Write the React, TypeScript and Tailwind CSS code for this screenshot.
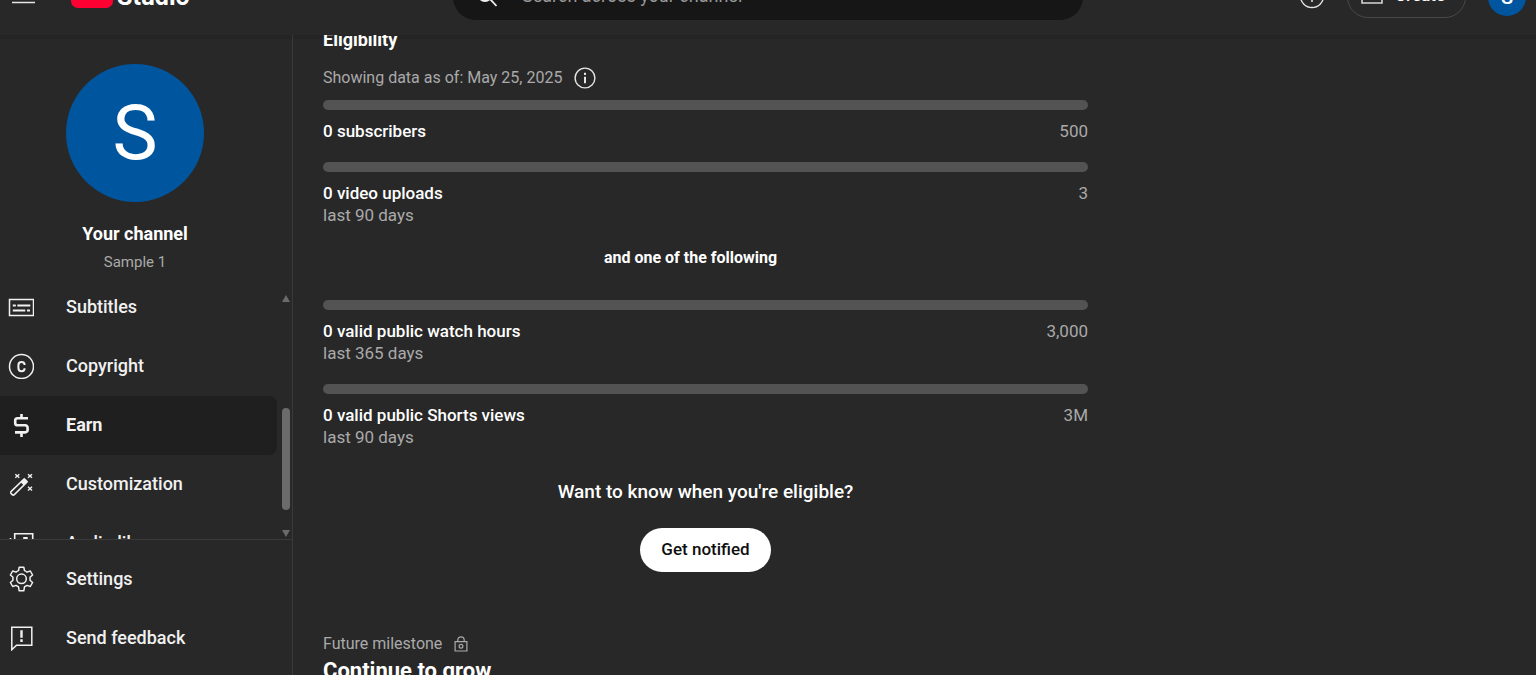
import type { ReactNode } from "react";

const SubtitlesIcon = () => (
  <svg viewBox="0 0 26 26" className="size-[26px]" fill="none" stroke="currentColor">
    <rect x="1.500" y="5.500" width="24" height="16" strokeWidth="1.500" />
    <path d="M4.800 11.500h3M9.300 11.500h13M4.800 16.500h12.500M19 16.500h3" strokeWidth="2.200" />
  </svg>
);

const CopyrightIcon = () => (
  <svg viewBox="0 0 26 26" className="size-[26px]" fill="none" stroke="currentColor">
    <circle cx="13.500" cy="13.500" r="12" strokeWidth="1.500" />
    <path d="M16.600 11.900c0-1.900-1.200-2.900-3-2.900s-3.200 1.200-3.200 3.200v2.800c0 2 1.300 3.200 3.200 3.200s3-1 3-2.900" strokeWidth="2" />
  </svg>
);

const EarnIcon = () => (
  <svg viewBox="0 0 26 26" className="size-[26px]" fill="none" stroke="currentColor">
    <path d="M20 6.200H9.600A2.400 2.400 0 0 0 7.200 8.600v2.300a2.400 2.400 0 0 0 2.400 2.400h7.600a2.400 2.400 0 0 1 2.400 2.400V18a2.400 2.400 0 0 1-2.400 2.400H7M13.500 2v4M13.500 20.500V25" strokeWidth="2.600" />
  </svg>
);

const CustomizationIcon = () => (
  <svg viewBox="0 0 26 26" className="size-[26px]" fill="none" stroke="currentColor">
    <path d="M3.200 20.400 15.800 8.200l3 3L6.300 23.600a1.500 1.500 0 0 1-2.100 0l-1-1a1.500 1.500 0 0 1 0-2.200Z" strokeWidth="1.500" />
    <path d="m12.800 11 3.700-3.600 3.100 3-3.600 3.600z" fill="currentColor" />
    <path d="m7.300 3.200 4 3.600m0-3.600-4 3.600M20 3.200l4 3.600m0-3.600-4 3.600M20 15.800l4 3.600m0-3.600-4 3.600" strokeWidth="1.400" />
  </svg>
);

const AudioIcon = () => (
  <svg viewBox="0 0 26 26" className="size-[26px]" fill="none" stroke="currentColor" strokeWidth="1.600">
    <path d="M6.700 3.700h18v17.500h-18zM2.500 8v17h17" />
    <path d="M16.700 16V8.500h3" strokeWidth="3" />
    <circle cx="14.500" cy="16" r="2" fill="currentColor" />
  </svg>
);

const SettingsIcon = () => (
  <svg viewBox="0 0 26 26" className="size-[26px]" fill="none" stroke="currentColor" strokeWidth="1.500" strokeLinejoin="round">
    <path d="M11.200 1.200h4.600l.7 3.400a9 9 0 0 1 2.500 1.500l3.300-1.100 2.300 4-2.600 2.300a9 9 0 0 1 0 2.900l2.600 2.300-2.300 4-3.300-1.100a9 9 0 0 1-2.500 1.400l-.7 4h-4.600l-.7-4a9 9 0 0 1-2.500-1.400l-3.300 1.100-2.300-4 2.600-2.300a9 9 0 0 1 0-2.900L2.400 9l2.300-4L8 6.100a9 9 0 0 1 2.500-1.500z" />
    <circle cx="13.500" cy="12.800" r="4.800" />
  </svg>
);

const FeedbackIcon = () => (
  <svg viewBox="0 0 26 26" className="size-[26px]" fill="none" stroke="currentColor">
    <path d="M3.800 2.200h20v18H8.500l-4.700 4.500z" strokeWidth="1.500" />
    <path d="M13.500 5.200v7.500M13.500 14.300v2.700" strokeWidth="2.400" />
  </svg>
);

const InfoIcon = () => (
  <svg viewBox="0 0 22 22" className="size-[22px]" fill="none" stroke="#e5e5e5">
    <circle cx="11" cy="11" r="9.900" strokeWidth="1.400" />
    <path d="M11 5.800V8M11 9.700v6.500" strokeWidth="2" />
  </svg>
);

const LockIcon = () => (
  <svg viewBox="0 0 14 16" className="h-4 w-3.5" fill="none" stroke="currentColor" strokeWidth="1.200">
    <path d="M1.100 5.600h11.800v9.400H1.100zM3.800 5.600V4a3.200 3.200 0 0 1 6.400 0v1.600" />
    <circle cx="7" cy="10.200" r="1.900" />
  </svg>
);

type NavItem = { label: string; icon: ReactNode; active?: boolean };

const NAV_ITEMS: NavItem[] = [
  { label: "Subtitles", icon: <SubtitlesIcon /> },
  { label: "Copyright", icon: <CopyrightIcon /> },
  { label: "Earn", icon: <EarnIcon />, active: true },
  { label: "Customization", icon: <CustomizationIcon /> },
  { label: "Audio library", icon: <AudioIcon /> },
];

const FOOTER_ITEMS: NavItem[] = [
  { label: "Settings", icon: <SettingsIcon /> },
  { label: "Send feedback", icon: <FeedbackIcon /> },
];

function NavLink({ label, icon, active }: NavItem) {
  return (
    <a
      href="#"
      className={`flex h-[59px] shrink-0 items-center gap-8 rounded-r-lg pb-0.5 pl-2 text-lg text-[#f1f1f1] ${active ? "bg-[#1f1f1f] font-bold" : "font-medium"}`}
    >
      {icon}
      {label}
    </a>
  );
}

function Requirement({ label, period, goal }: { label: string; period?: string; goal: string }) {
  return (
    <div>
      <div className="h-2.5 rounded-full bg-[#535353]" />
      <div className="mt-2.5 flex justify-between text-[17px] leading-[22px]">
        <span className="font-medium text-white">{label}</span>
        <span className="text-[#aaa]">{goal}</span>
      </div>
      {period && <p className="text-[17px] leading-[22px] text-[#aaa]">{period}</p>}
    </div>
  );
}

function Header() {
  return (
    <header className="shrink-0 overflow-hidden shadow-[0_4px_0_#242424]">
      <div className="-mt-[42px] flex h-[77px] items-center px-2.5">
        <div className="flex flex-1 items-center">
          <button aria-label="Menu" className="w-[27px]">
            <svg viewBox="0 0 27 14" className="h-3.5 w-[27px]" stroke="#e5e5e5" strokeWidth="1.500">
              <path d="M2 1h23M2 7h23M2 12.500h23" />
            </svg>
          </button>
          <a href="#" className="ml-[34px] flex items-center gap-1 text-[25px] font-bold text-white">
            <svg viewBox="0 0 42 24" className="h-6 w-[42px]">
              <rect y="-6" width="42" height="29" rx="7" fill="#ff0033" />
              <path d="m17 3 9 5-9 5z" fill="#fff" />
            </svg>
            Studio
          </a>
        </div>

        <label className="flex h-[46px] w-[630px] items-center gap-[23px] rounded-full bg-[#161616] pl-[22px]">
          <svg viewBox="0 0 24 24" className="size-6" fill="none" stroke="#f1f1f1" strokeWidth="1.800">
            <circle cx="10" cy="9" r="7" />
            <path d="m15 14 6.500 7" />
          </svg>
          <input
            type="text"
            aria-label="Search"
            placeholder="Search across your channel"
            className="flex-1 bg-transparent pb-0.5 text-lg outline-none placeholder:text-[#999]"
          />
        </label>

        <div className="flex flex-1 items-center justify-end gap-[22px]">
          <button aria-label="Help">
            <svg viewBox="0 0 26 26" className="size-[26px]" fill="none" stroke="#e5e5e5">
              <circle cx="13" cy="12" r="11.500" strokeWidth="1.400" />
              <path d="M9.500 8.500a3.500 3.500 0 1 1 5 3.200c-1 .5-1.500 1-1.500 2.300M13 15.500v2.500" strokeWidth="1.500" />
            </svg>
          </button>
          <button className="flex h-[42px] w-[119px] items-center gap-3 rounded-full border border-[#484848] pb-0.5 pl-[13px] text-[17px] font-medium text-white">
            <svg viewBox="0 0 22 16" className="h-4 w-[22px]" fill="none" stroke="#d5d5d5" strokeWidth="1.600">
              <path d="M1 1h20v14H1zM11 4v6M8 7h6" />
            </svg>
            Create
          </button>
          <button className="flex size-[38px] items-center justify-center rounded-full bg-[#00569e] text-xl font-medium text-white">
            S
          </button>
        </div>
      </div>
    </header>
  );
}

function Sidebar() {
  return (
    <aside className="flex w-[293px] shrink-0 flex-col border-r border-[#3a3a3a]">
      <div className="flex shrink-0 flex-col items-center pt-[29px] pr-[22px]">
        <div className="flex size-[138px] items-center justify-center rounded-full bg-[#00569e] text-[76px] text-white">
          S
        </div>
        <p className="mt-5 text-lg leading-6 font-bold text-white">Your channel</p>
        <p className="mt-1 text-[15px] leading-6 text-[#aaa]">Sample 1</p>
      </div>

      <div className="mt-4 flex min-h-0 flex-1 border-b border-[#3a3a3a]">
        <nav className="flex flex-1 flex-col overflow-hidden">
          <div className="-mt-3 flex flex-col">
            {NAV_ITEMS.map((item) => (
              <NavLink key={item.label} {...item} />
            ))}
          </div>
        </nav>
        <div className="flex w-[15px] flex-col items-center pt-[5px] pb-0.5 pl-0.5">
          <svg viewBox="0 0 8 7" className="h-[7px] w-2" fill="#6b6b6b">
            <path d="M4 0l4 7H0z" />
          </svg>
          <div className="mt-[106px] h-[102px] w-2 rounded-full bg-[#6b6b6b]" />
          <svg viewBox="0 0 8 7" className="mt-auto h-[7px] w-2" fill="#6b6b6b">
            <path d="M4 7L0 0h8z" />
          </svg>
        </div>
      </div>

      <div className="shrink-0 pt-2.5 pb-[7px]">
        {FOOTER_ITEMS.map((item) => (
          <NavLink key={item.label} {...item} />
        ))}
      </div>
    </aside>
  );
}

export default function App() {
  return (
    <div className="flex h-screen flex-col overflow-hidden bg-[#282828] font-['Roboto',sans-serif] text-[#f1f1f1]">
      <Header />
      <div className="flex min-h-0 flex-1">
        <Sidebar />
        <main className="flex-1 overflow-hidden px-[30px]">
          <div className="-mt-[7px] max-w-[765px]">
            <h2 className="text-lg leading-6 font-bold text-white">Eligibility</h2>
            <div className="mt-3.5 flex items-center gap-3 text-base text-[#aaa]">
              Showing data as of: May 25, 2025
              <button aria-label="More information">
                <InfoIcon />
              </button>
            </div>

            <div className="mt-2.5 flex flex-col gap-5">
              <Requirement label="0 subscribers" goal="500" />
              <Requirement label="0 video uploads" period="last 90 days" goal="3" />
            </div>
            <p className="mt-5 pr-[30px] text-center text-base font-bold text-white">and one of the following</p>
            <div className="mt-[30px] flex flex-col gap-5">
              <Requirement label="0 valid public watch hours" period="last 365 days" goal="3,000" />
              <Requirement label="0 valid public Shorts views" period="last 90 days" goal="3M" />
            </div>

            <div className="mt-8 flex flex-col items-center gap-6">
              <h3 className="text-[19px] leading-6 font-medium text-white">Want to know when you're eligible?</h3>
              <button className="h-11 rounded-full bg-white px-[21px] text-[17px] font-medium text-[#0f0f0f]">Get notified</button>
            </div>

            <div className="mt-[60px] flex items-center gap-3 text-base text-[#aaa]">
              Future milestone
              <LockIcon />
            </div>
            <h2 className="text-[22px] leading-[30px] font-bold text-white">Continue to grow</h2>
          </div>
        </main>
      </div>
    </div>
  );
}
